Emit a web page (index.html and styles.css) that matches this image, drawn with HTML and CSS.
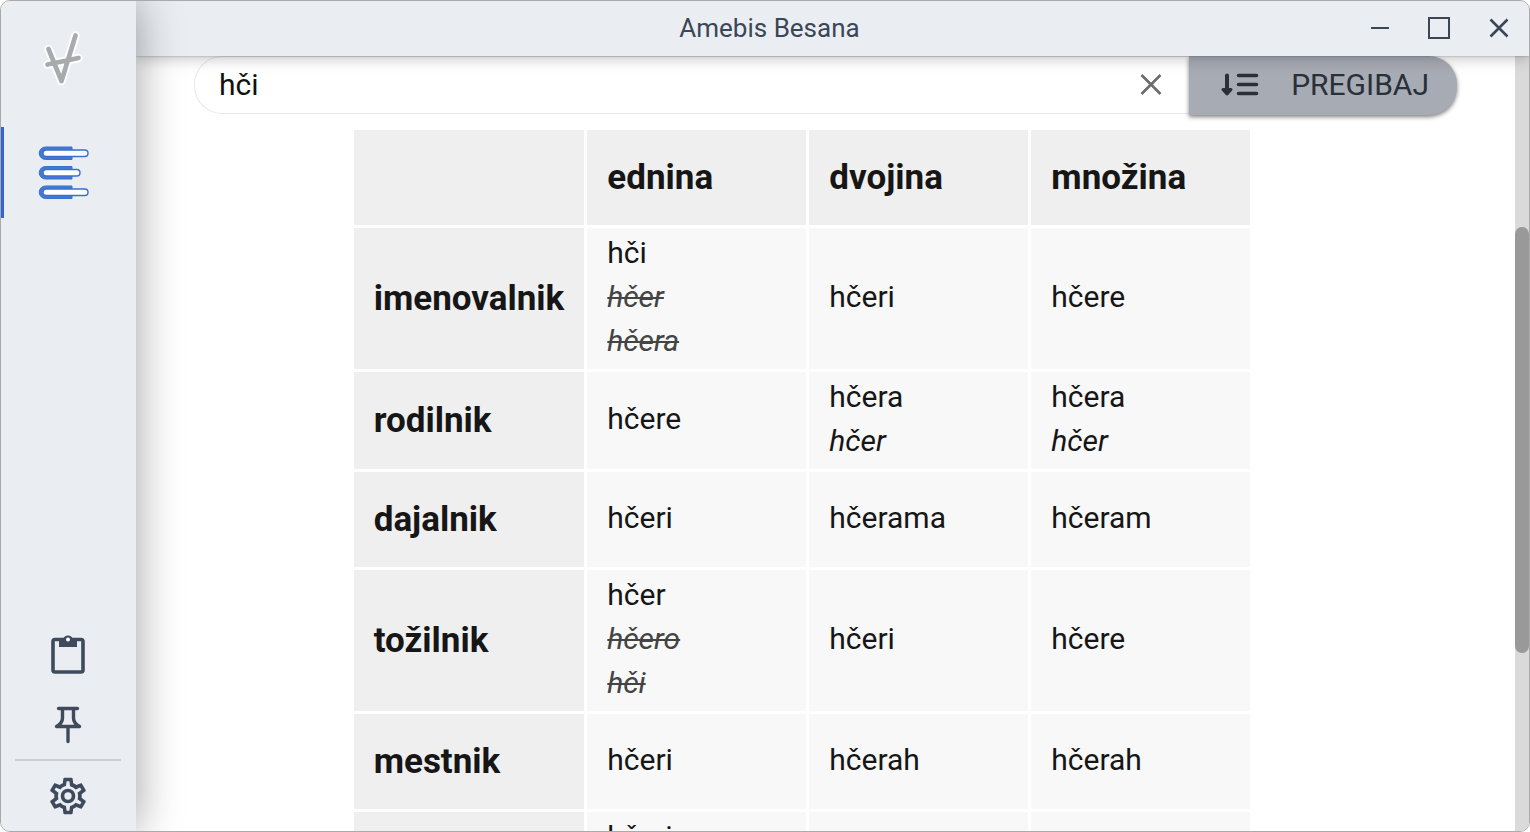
FILE: index.html
```html
<!DOCTYPE html>
<html lang="sl">
<head>
<meta charset="utf-8">
<title>Amebis Besana</title>
<link rel="stylesheet" href="styles.css">
</head>
<body>
<div class="window">
  <nav class="sidebar" aria-label="Orodja">
    <a class="logo" href="#" aria-label="Besana">
      <svg width="44" height="60" viewBox="0 0 44 60" fill="none" stroke-linecap="round" stroke-linejoin="round">
        <path d="M8.500 20 21.500 52 35.500 6.500M7.500 35.500 38.500 29" stroke="#fff" stroke-width="8.500"/>
        <path d="M8.500 20 21.500 52 35.500 6.500M7.500 35.500 38.500 29" stroke="#a8abad" stroke-width="4.700"/>
      </svg>
    </a>
    <a class="tool tool-active" href="#" aria-label="Pregibanje">
      <svg width="52" height="56" viewBox="0 0 52 56">
        <g fill="#4479d0" stroke="#3a6fcf" stroke-width="1">
          <path d="M34 2H7.500a6.200 6.200 0 0 0 0 12.500H34z"/>
          <path d="M34 21.500H7.500a6.200 6.200 0 0 0 0 12.500H34z"/>
          <path d="M34 41H7.500a6.200 6.200 0 0 0 0 12.500H34z"/>
        </g>
        <g fill="#fff" stroke="#3a6fcf" stroke-width="1.400">
          <rect x="5" y="5" width="45" height="6.500" rx="3.200"/>
          <rect x="5" y="24.500" width="37" height="6.500" rx="3.200"/>
          <rect x="5" y="44" width="45" height="6.500" rx="3.200"/>
        </g>
      </svg>
    </a>
    <div class="sidebar-bottom">
      <button class="side-btn" type="button" aria-label="Odložišče">
        <svg width="36" height="42" viewBox="0 0 36 42">
          <rect x="3" y="6.500" width="30" height="32.500" rx="2" fill="none" stroke="#3f4b5c" stroke-width="3.600"/>
          <path d="M9 6h4.200a5 5 0 0 1 9.600 0H27v8H9z" fill="#3f4b5c"/>
          <circle cx="18" cy="6.500" r="2" fill="#fff"/>
        </svg>
      </button>
      <button class="side-btn" type="button" aria-label="Pripni">
        <svg width="36" height="42" viewBox="0 0 36 42" fill="none" stroke="#3f4b5c" stroke-width="3.400" stroke-linecap="round" stroke-linejoin="round">
          <path d="M8.500 5.500h19M12.500 6v9c0 4-1.500 6-6 8.500h23c-4.500-2.500-6-4.500-6-8.500V6M18 24v14.500"/>
        </svg>
      </button>
      <hr class="divider">
      <button class="side-btn" type="button" aria-label="Nastavitve">
        <svg width="44" height="44" viewBox="0 0 24 24" fill="#3f4b5c">
          <path d="M12 8a4 4 0 0 1 4 4 4 4 0 0 1-4 4 4 4 0 0 1-4-4 4 4 0 0 1 4-4m0 2a2 2 0 0 0-2 2 2 2 0 0 0 2 2 2 2 0 0 0 2-2 2 2 0 0 0-2-2m-2 12c-.25 0-.46-.18-.5-.42l-.37-2.650c-.63-.25-1.170-.59-1.690-.99l-2.490 1.010c-.22.080-.49 0-.61-.22l-2-3.460c-.13-.22-.07-.49.120-.64l2.110-1.660L4.500 12l.07-1-2.110-1.630c-.19-.15-.25-.42-.12-.64l2-3.460c.12-.22.39-.31.61-.22l2.490 1c.52-.39 1.060-.73 1.690-.98l.37-2.650c.04-.24.25-.42.5-.42h4c.25 0 .46.180.5.420l.37 2.650c.63.250 1.170.590 1.690.980l2.490-1c.22-.09.49 0 .61.220l2 3.460c.13.220.070.490-.12.640L19.430 11l.07 1-.07 1 2.110 1.630c.19.150.250.420.120.640l-2 3.460c-.12.220-.39.310-.61.220l-2.490-1c-.52.390-1.060.730-1.690.980l-.37 2.650c-.04.240-.25.420-.5.420h-4m1.250-18-.37 2.610c-1.200.250-2.260.890-3.030 1.780L5.440 7.350l-.75 1.300L6.800 10.200a5.550 5.550 0 0 0 0 3.600l-2.120 1.560.75 1.300 2.430-1.040c.770.880 1.820 1.520 3.010 1.760l.37 2.620h1.520l.37-2.610c1.190-.25 2.240-.89 3.010-1.770l2.430 1.040.75-1.300-2.120-1.550c.4-1.170.4-2.440 0-3.610l2.110-1.550-.75-1.300-2.410 1.040a5.420 5.420 0 0 0-3.030-1.770L12.750 4h-1.500z"/>
        </svg>
      </button>
    </div>
  </nav>

  <div class="content">
    <header class="titlebar">
      <h1 class="title">Amebis Besana</h1>
      <button class="win-btn" type="button" aria-label="Pomanjšaj">
        <svg width="24" height="24" viewBox="0 0 24 24" fill="none" stroke="#3b4656" stroke-width="2"><path d="M4 12h18"/></svg>
      </button>
      <button class="win-btn" type="button" aria-label="Povečaj">
        <svg width="24" height="24" viewBox="0 0 24 24" fill="none" stroke="#3b4656" stroke-width="2"><path d="M2 2h20v20H2z"/></svg>
      </button>
      <button class="win-btn" type="button" aria-label="Zapri">
        <svg width="24" height="24" viewBox="0 0 24 24" fill="none" stroke="#3b4656" stroke-width="2.600"><path d="M3.500 3.500l17 17M20.500 3.500l-17 17"/></svg>
      </button>
    </header>

    <div class="body">
      <main class="page">
        <form class="search">
          <div class="field">
            <input class="field-input" type="text" value="hči" aria-label="Beseda">
            <button class="clear" type="button" aria-label="Počisti">
              <svg width="24" height="24" viewBox="0 0 24 24" fill="none" stroke="#6b6b6b" stroke-width="2.600"><path d="M2.500 2l19 19M21.500 2l-19 19"/></svg>
            </button>
          </div>
          <button class="submit" type="button">
            <svg width="38" height="26" viewBox="0 0 38 26" fill="none" stroke="#2a3039" stroke-width="3.600" stroke-linecap="round" stroke-linejoin="round">
              <path d="M6 3.500v16" stroke-width="4"/><path d="M2 17.500h8L6 22z" fill="#2a3039" stroke-width="3"/><path d="M17.500 3.500h18M17.500 12.500h18M17.500 21.500h18"/>
            </svg>
            <span>PREGIBAJ</span>
          </button>
        </form>

        <div class="result">
          <table class="forms">
            <thead>
              <tr><td class="corner"></td><th scope="col">ednina</th><th scope="col">dvojina</th><th scope="col">množina</th></tr>
            </thead>
            <tbody>
              <tr><th scope="row">imenovalnik</th><td>hči<br><s>hčer</s><br><s>hčera</s></td><td>hčeri</td><td>hčere</td></tr>
              <tr><th scope="row">rodilnik</th><td>hčere</td><td>hčera<br><i>hčer</i></td><td>hčera<br><i>hčer</i></td></tr>
              <tr><th scope="row">dajalnik</th><td>hčeri</td><td>hčerama</td><td>hčeram</td></tr>
              <tr><th scope="row">tožilnik</th><td>hčer<br><s>hčero</s><br><s>hči</s></td><td>hčeri</td><td>hčere</td></tr>
              <tr><th scope="row">mestnik</th><td>hčeri</td><td>hčerah</td><td>hčerah</td></tr>
              <tr><th scope="row"></th><td>hčerjo<br><s>hčero</s></td><td></td><td></td></tr>
            </tbody>
          </table>
        </div>
      </main>
      <div class="scrollbar"><div class="thumb"></div></div>
    </div>
  </div>
</div>
</body>
</html>
```
FILE: styles.css
```css
* { box-sizing: border-box; }

body {
  margin: 0;
  background: #fff;
  font-family: Roboto, "Liberation Sans", sans-serif;
  color: #161616;
}

button {
  border: 0;
  padding: 0;
  background: none;
  font: inherit;
  color: inherit;
}

svg { display: block; }

.window {
  display: flex;
  height: 100vh;
  border: 1px solid #aaa;
  border-radius: 10px;
  overflow: hidden;
}

.sidebar {
  display: flex;
  flex-direction: column;
  flex: none;
  width: 135px;
  background: #eaeef3;
  box-shadow: 0 0 42px rgba(0, 0, 0, 0.38);
  z-index: 3;
}

.logo {
  align-self: center;
  margin: 28px 14px 38px 0;
}

.tool {
  display: flex;
  align-items: center;
  height: 91px;
  padding-left: 34px;
  border-left: 3px solid transparent;
}

.tool-active { border-color: #2f66d0; }

.sidebar-bottom {
  display: flex;
  flex-direction: column;
  align-items: center;
  margin-top: auto;
}

.side-btn {
  display: grid;
  place-items: center;
  width: 70px;
  height: 70px;
  margin-right: 2px;
}

.divider {
  align-self: stretch;
  height: 2px;
  margin: 0 15px 0 14px;
  border: 0;
  background: #cbd0d2;
}

.content {
  display: flex;
  flex-direction: column;
  flex: 1;
  min-width: 0;
}

.titlebar {
  display: flex;
  align-items: stretch;
  flex: none;
  height: 55px;
  padding: 0 0 1px 54px;
  background: #eaeef3;
  color: #3b4656;
  box-shadow: 0 0 2px rgba(0, 0, 0, 0.3), 0 2px 14px rgba(0, 0, 0, 0.25);
  z-index: 2;
}

.title {
  flex: 1;
  margin: 0;
  font-size: 26px;
  font-weight: 400;
  line-height: 54px;
  text-align: center;
}

.win-btn {
  display: grid;
  place-items: center;
  width: 60px;
}

.body {
  display: flex;
  flex: 1;
  min-height: 0;
}

.page {
  flex: 1;
  min-width: 0;
  padding: 0 58px;
  overflow: hidden;
}

.search {
  display: flex;
  align-items: flex-start;
}

.field {
  display: flex;
  flex: 1;
  height: 58px;
  border: 1px solid #e8e8e8;
  border-right: 0;
  border-radius: 28px 0 0 28px;
}

.field-input {
  flex: 1;
  min-width: 0;
  padding: 0 0 0 24px;
  border: 0;
  outline: 0;
  background: none;
  font: 30px/44px Roboto, "Liberation Sans", sans-serif;
  color: #111;
}

.clear {
  display: grid;
  place-items: center;
  width: 76px;
}

.submit {
  display: flex;
  align-items: center;
  gap: 32px;
  height: 59px;
  padding: 0 28px 2px 32px;
  border-radius: 0 28px 28px 0;
  background: #a7abb4;
  box-shadow: 0 2px 4px rgba(0, 0, 0, 0.5);
  font-size: 30px;
  color: #2a3039;
}

.result {
  display: flex;
  justify-content: center;
  margin: 12px 47px 0 0;
}

.forms {
  border-spacing: 3px;
  font-size: 30px;
  line-height: 44px;
}

.forms th,
.forms td {
  width: 219px;
  height: 95px;
  padding: 3px 20px 6px;
  background: #f8f8f8;
  text-align: left;
}

.forms th,
.forms .corner { background: #efefef; }

.forms th {
  padding: 5px 20px 4px;
  font-size: 35px;
  font-weight: 700;
}

.forms th:first-child,
.forms .corner { width: 230px; }

.forms s {
  font-style: italic;
  color: #444;
  text-decoration-thickness: 2px;
}

.scrollbar {
  display: grid;
  grid-template-rows: 22fr 55fr 23fr;
  width: 14px;
  background: #dadada;
}

.thumb {
  grid-row: 2;
  border-radius: 7px;
  background: #999;
}
```
